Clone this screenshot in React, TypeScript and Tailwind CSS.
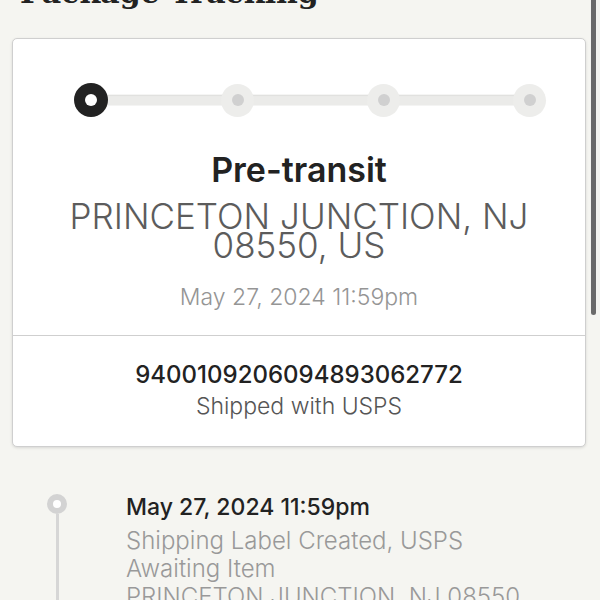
const steps = [true, false, false, false]

function StepDot({ active }: { active: boolean }) {
  if (active) {
    return (
      <span className="relative flex h-[34px] w-[34px] items-center justify-center rounded-full bg-[#222222]">
        <span className="h-[12px] w-[12px] rounded-full bg-white" />
      </span>
    )
  }
  return (
    <span className="relative flex h-[33px] w-[33px] items-center justify-center rounded-full bg-[#ededeb]">
      <span className="h-[12px] w-[12px] rounded-full bg-[#d0d0d0]" />
    </span>
  )
}

export default function App() {
  return (
    <div className="relative h-[600px] overflow-hidden bg-[#f5f5f1] font-['Inter',sans-serif] text-[#222222]">
      <div className="pl-3 pr-[14px]">
        {/* Title */}
        <h1 className="-mt-[25px] pl-2 font-['DejaVu_Serif',serif] text-[30px] leading-[36px] font-bold text-[#222222]">
          Package Tracking
        </h1>

        {/* Status card */}
        <div className="mt-[27px] rounded-[5px] border border-[#cfcfcf] bg-white shadow-[0_1px_3px_rgba(0,0,0,0.12)]">
          <div className="pt-[44px] pb-[24px]">
            <div className="relative mr-[39px] ml-[61px] flex items-center justify-between">
              <div className="absolute top-1/2 right-4 left-4 h-[11px] -translate-y-1/2 bg-[#ebebe9] shadow-[inset_0_1px_1px_rgba(0,0,0,0.08)]" />
              {steps.map((active, i) => (
                <StepDot key={i} active={active} />
              ))}
            </div>

            <div className="mt-[35px] text-center">
              <p className="text-[34px] leading-[36px] font-semibold text-[#222222]">Pre-transit</p>
              <p className="mt-[14px] px-2 text-[35px] leading-[29px] font-light text-[#5c5c5c]">
                PRINCETON JUNCTION, NJ
                <br />
                08550, US
              </p>
              <p className="mt-[23px] text-[23px] leading-[28px] font-light text-[#959595]">May 27, 2024 11:59pm</p>
            </div>
          </div>

          <div className="border-t border-[#cfcfcf] pt-[24px] pb-[26px] text-center">
            <p className="text-[24px] leading-[30px] font-medium text-[#222222]">9400109206094893062772</p>
            <p className="mt-[2px] text-[23px] leading-[28px] font-light text-[#555555]">Shipped with USPS</p>
          </div>
        </div>

        {/* Timeline */}
        <div className="mt-[46px] flex pl-[35px]">
          <div className="flex w-5 flex-col items-center">
            <span className="mt-[1px] h-5 w-5 rounded-full border-[6px] border-[#d3d3d3] bg-white" />
            <span className="w-[3px] flex-1 bg-[#d6d6d6]" />
          </div>
          <div className="ml-[59px]">
            <p className="text-[23px] leading-[28px] font-medium text-[#222222]">May 27, 2024 11:59pm</p>
            <p className="mt-[6px] text-[24px] leading-[28px] font-light text-[#999999]">
              Shipping Label Created, USPS
              <br />
              Awaiting Item
            </p>
            <p className="text-[24px] leading-[28px] font-light text-[#999999]">PRINCETON JUNCTION, NJ 08550</p>
          </div>
        </div>
      </div>

      {/* Scrollbar thumb */}
      <div className="absolute top-0 right-[4px] h-[315px] w-[5px] rounded-b-full bg-[#6b6b6b]" />
    </div>
  )
}
